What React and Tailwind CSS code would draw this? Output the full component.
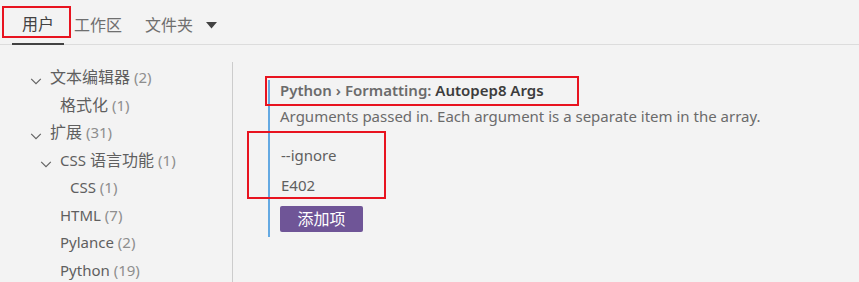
import React from "react";

const font = { fontFamily: '"Noto Sans", "Noto Sans CJK SC", sans-serif' };

const tree = [
  { label: "文本编辑器", count: 2, level: 0, chevron: true },
  { label: "格式化", count: 1, level: 1 },
  { label: "扩展", count: 31, level: 0, chevron: true },
  { label: "CSS", cjk: " 语言功能", count: 1, level: 1, chevron: true },
  { label: "CSS", count: 1, level: 2 },
  { label: "HTML", count: 7, level: 1 },
  { label: "Pylance", count: 2, level: 1 },
  { label: "Python", count: 19, level: 1 },
];

const pad = ["pl-[50px]", "pl-[60px]", "pl-[70px]"];

function Chevron() {
  return (
    <svg width="14" height="14" viewBox="0 0 16 16" className="absolute -left-[21px] top-[7px]">
      <path d="M2.5 5.5l5.5 5.5 5.5-5.5" fill="none" stroke="#616161" strokeWidth="1.3" />
    </svg>
  );
}

export default function App() {
  return (
    <div className="relative w-[859px] h-[282px] overflow-hidden bg-[#f3f3f3] text-[#616161]" style={font}>
      {/* tabs */}
      <div className="flex items-end h-[45px] border-b border-[#dcdcdc] pl-[12px] text-[16px]">
        <div className="px-[10px] pb-[7px] border-b-2 border-[#424242] text-[#424242] -mb-px">用户</div>
        <div className="px-[10px] pb-[7px] text-[#6f6f6f]">工作区</div>
        <div className="flex items-center gap-[13px] px-[13px] pb-[7px] text-[#6f6f6f]">
          文件夹
          <svg width="11" height="7" viewBox="0 0 11 7">
            <path d="M0 0h11L5.5 6.5z" fill="#424242" />
          </svg>
        </div>
      </div>

      <div className="flex">
        {/* tree */}
        <div className="w-[233px] pt-[17px] h-[237px]">
          <div className="border-r border-[#cccccc] h-full pt-[2px]">
            {tree.map((t, i) => (
              <div key={i} className={`h-[27.5px] leading-[27.5px] text-[15px] ${pad[t.level]}`}>
                <span className="relative text-[#5f5f5f]">
                  {t.chevron && <Chevron />}
                  {/^[A-Za-z]/.test(t.label) ? t.label : <span className="text-[16px]">{t.label}</span>}
                  {t.cjk && <span className="text-[16px]">{t.cjk}</span>}
                </span>
                <span className="text-[#8e8e8e]"> ({t.count})</span>
              </div>
            ))}
          </div>
        </div>

        {/* setting */}
        <div className="flex-1 pl-[35px] pt-[35px]">
          <div className="border-l-2 border-[#64a9e2] pl-[10px] h-[157px]">
            <div className="text-[15px] font-semibold leading-[20px]">
              <span className="text-[#6b6b6b]">Python › Formatting: </span>
              <span className="text-[#3c3c3c]">Autopep8 Args</span>
            </div>
            <div className="text-[15px] leading-[20px] mt-[6px] text-[#6b6b6b]">
              Arguments passed in. Each argument is a separate item in the array.
            </div>
            <div className="mt-[14px] text-[15px] text-[#5f5f5f]">
              <div className="h-[30px] leading-[30px] pl-[1px]">--ignore</div>
              <div className="h-[30px] leading-[30px] pl-[1px]">E402</div>
            </div>
            <button className="mt-[6px] h-[26px] w-[83px] rounded-[2px] bg-[#6f5597] text-white text-[16px] leading-[26px]">
              添加项
            </button>
          </div>
        </div>
      </div>

      {/* annotation boxes */}
      <div className="absolute left-[2px] top-[6px] w-[69px] h-[32px] border-2 border-[#e8131f]" />
      <div className="absolute left-[265px] top-[76px] w-[314px] h-[30px] border-2 border-[#e8131f]" />
      <div className="absolute left-[247px] top-[131px] w-[139px] h-[68px] border-2 border-[#e8131f]" />
    </div>
  );
}
